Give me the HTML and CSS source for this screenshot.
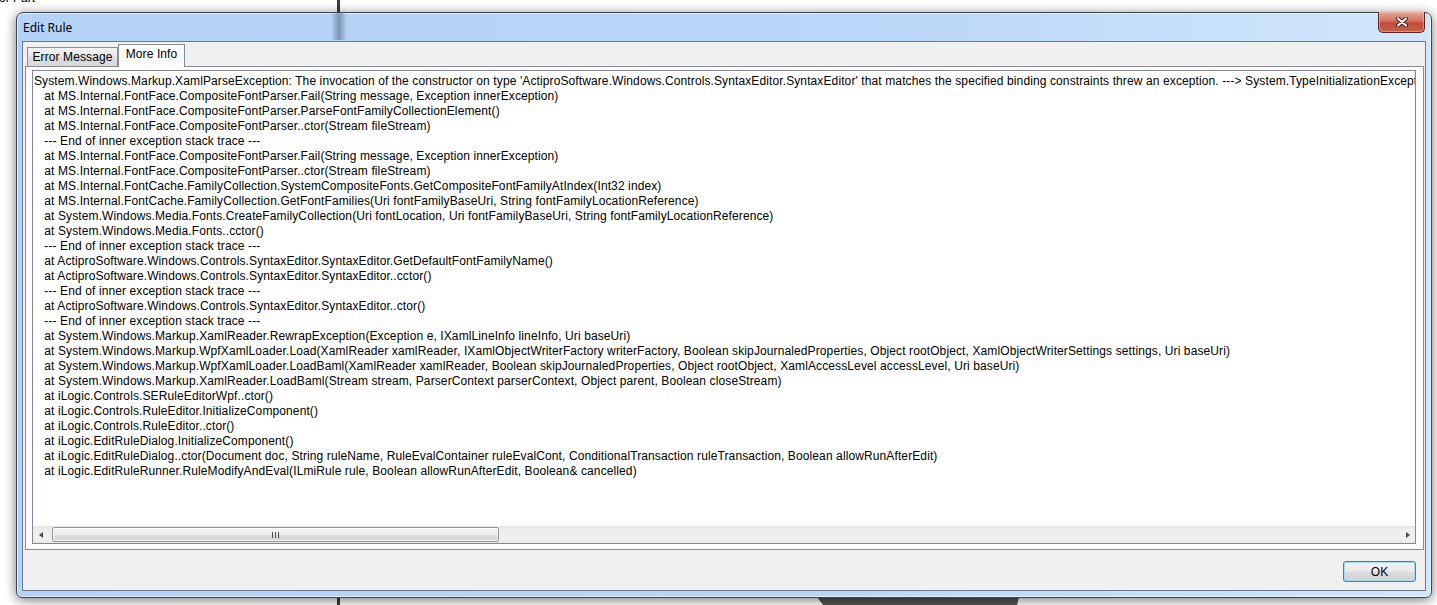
FILE: index.html
```html
<!DOCTYPE html>
<html lang="en">
<head>
  <meta charset="UTF-8" />
  <title>Edit Rule</title>
  <link rel="stylesheet" href="styles.css">
</head>
<body>
  <div class="desktop">
    <div class="bg-text">or Part</div>
    <div class="bg-line"></div>
    <div class="bg-shape"></div>

    <div class="window">
      <div class="titlebar">
        <span class="title">Edit Rule</span>
        <div class="glass-band"></div>
        <div class="close">
          <svg width="14" height="10" viewBox="0 0 14 10">
            <path d="M3 1.5 L11 8.5 M11 1.5 L3 8.5" stroke="#3b1a1a" stroke-width="4" stroke-linecap="round" fill="none"/>
            <path d="M3 1.5 L11 8.5 M11 1.5 L3 8.5" stroke="#fff" stroke-width="2.2" stroke-linecap="round" fill="none"/>
          </svg>
        </div>
      </div>

      <div class="client">
        <div class="tabs">
          <div class="tab tab-err">Error Message</div>
          <div class="tab active">More Info</div>
        </div>
        <div class="tab-panel">
          <div class="textbox">
<div class="trace">System.Windows.Markup.XamlParseException: The invocation of the constructor on type 'ActiproSoftware.Windows.Controls.SyntaxEditor.SyntaxEditor' that matches the specified binding constraints threw an exception. ---&gt; System.TypeInitializationException: The type initializer for 'ActiproSoftware.Windows.Controls.SyntaxEditor.SyntaxEditor' threw an exception.
   at MS.Internal.FontFace.CompositeFontParser.Fail(String message, Exception innerException)
   at MS.Internal.FontFace.CompositeFontParser.ParseFontFamilyCollectionElement()
   at MS.Internal.FontFace.CompositeFontParser..ctor(Stream fileStream)
   --- End of inner exception stack trace ---
   at MS.Internal.FontFace.CompositeFontParser.Fail(String message, Exception innerException)
   at MS.Internal.FontFace.CompositeFontParser..ctor(Stream fileStream)
   at MS.Internal.FontCache.FamilyCollection.SystemCompositeFonts.GetCompositeFontFamilyAtIndex(Int32 index)
   at MS.Internal.FontCache.FamilyCollection.GetFontFamilies(Uri fontFamilyBaseUri, String fontFamilyLocationReference)
   at System.Windows.Media.Fonts.CreateFamilyCollection(Uri fontLocation, Uri fontFamilyBaseUri, String fontFamilyLocationReference)
   at System.Windows.Media.Fonts..cctor()
   --- End of inner exception stack trace ---
   at ActiproSoftware.Windows.Controls.SyntaxEditor.SyntaxEditor.GetDefaultFontFamilyName()
   at ActiproSoftware.Windows.Controls.SyntaxEditor.SyntaxEditor..cctor()
   --- End of inner exception stack trace ---
   at ActiproSoftware.Windows.Controls.SyntaxEditor.SyntaxEditor..ctor()
   --- End of inner exception stack trace ---
   at System.Windows.Markup.XamlReader.RewrapException(Exception e, IXamlLineInfo lineInfo, Uri baseUri)
   at System.Windows.Markup.WpfXamlLoader.Load(XamlReader xamlReader, IXamlObjectWriterFactory writerFactory, Boolean skipJournaledProperties, Object rootObject, XamlObjectWriterSettings settings, Uri baseUri)
   at System.Windows.Markup.WpfXamlLoader.LoadBaml(XamlReader xamlReader, Boolean skipJournaledProperties, Object rootObject, XamlAccessLevel accessLevel, Uri baseUri)
   at System.Windows.Markup.XamlReader.LoadBaml(Stream stream, ParserContext parserContext, Object parent, Boolean closeStream)
   at iLogic.Controls.SERuleEditorWpf..ctor()
   at iLogic.Controls.RuleEditor.InitializeComponent()
   at iLogic.Controls.RuleEditor..ctor()
   at iLogic.EditRuleDialog.InitializeComponent()
   at iLogic.EditRuleDialog..ctor(Document doc, String ruleName, RuleEvalContainer ruleEvalCont, ConditionalTransaction ruleTransaction, Boolean allowRunAfterEdit)
   at iLogic.EditRuleRunner.RuleModifyAndEval(ILmiRule rule, Boolean allowRunAfterEdit, Boolean&amp; cancelled)</div>
            <div class="hscroll">
              <div class="sb-btn"><span class="arrow-left"></span></div>
              <div class="sb-track">
                <div class="sb-thumb">
                  <svg width="8" height="6" viewBox="0 0 8 6">
                    <path d="M0.5 0 V6 M3.5 0 V6 M6.5 0 V6" stroke="#4d4d4d" stroke-width="1" fill="none"/>
                  </svg>
                </div>
              </div>
              <div class="sb-btn"><span class="arrow-right"></span></div>
            </div>
          </div>
        </div>
        <div class="footer">
          <button class="ok">OK</button>
        </div>
      </div>
    </div>
  </div>
</body>
</html>
```

FILE: styles.css
```css
* { box-sizing: border-box; }
body { margin: 0; background: #fff; font-family: "Liberation Sans", Arial, sans-serif; font-size: 12px; color: #000; overflow: hidden; }
.desktop { position: relative; width: 1437px; height: 605px; overflow: hidden; background: #fff; }

/* things behind the dialog */
.bg-text { position: absolute; left: -1px; top: -8px; font-size: 12px; line-height: 12px; }
.bg-line { position: absolute; left: 337px; top: 0; width: 3px; height: 605px; background: #3a3a3a; }
.bg-shape { position: absolute; left: 817px; top: 597px; width: 202px; height: 8px; background: #555; clip-path: polygon(0 0, 100% 0, 99% 100%, 3% 100%); }

/* dialog frame */
.window { position: absolute; left: 16px; top: 12px; width: 1416px; height: 586px; padding: 0 5px 6px; display: flex; flex-direction: column;
  border: 1px solid #3d4753; border-radius: 7px 7px 6px 6px;
  background: linear-gradient(90deg, #b3d2f5, #b9d7f8 60%, #d2e6fb);
  box-shadow: inset 0 0 0 1px rgba(255,255,255,0.55), 0 2px 12px rgba(0,0,0,0.55); }
.titlebar { position: relative; height: 28px; flex: none; display: flex; align-items: center; padding-left: 1px; }
.title { font-family: "Noto Sans", "Open Sans", sans-serif; font-size: 12px; position: relative; z-index: 1; }
.glass-band { position: absolute; left: 309px; top: -1px; width: 16px; height: 28px; background: linear-gradient(90deg, rgba(60,80,110,0), rgba(60,80,110,0.45) 45%, rgba(60,80,110,0.45) 55%, rgba(60,80,110,0)); }
.close { position: absolute; right: 1px; top: -1px; width: 47px; height: 21px; display: flex; align-items: center; justify-content: center;
  border: 1px solid #5b2424; border-top: none; border-radius: 0 0 5px 5px;
  background: linear-gradient(#e6a898, #d0725f 45%, #c14a3a 55%, #c8614c);
  box-shadow: inset 0 0 0 1px rgba(255,200,190,0.45); }

/* client area */
.client { flex: none; height: 550px; border: 1px solid #6b7a8c; background: #f0f0f0; padding: 2px 1px 0 2px; display: flex; flex-direction: column; }
.tabs { height: 22px; flex: none; display: flex; align-items: flex-end; padding-left: 2px; position: relative; z-index: 1; }
.tab { height: 19px; border: 1px solid #898c95; border-bottom: none; text-align: center; line-height: 18px; letter-spacing: 0.1px;
  background: linear-gradient(#f3f3f3, #e8e8e8 45%, #dcdcdc 55%, #d9d9d9); }
.tab-err { width: 91px; }
.tab.active { width: 67px; height: 23px; margin-bottom: -1px; background: #fcfcfc; line-height: 18px; }

.tab-panel { height: 484px; flex: none; border: 1px solid #898c95; background: #fcfcfc; padding: 3px 7px 5px 6px; }
.textbox { height: 474px; border: 1px solid #828790; background: #fff; display: flex; flex-direction: column; overflow: hidden; }
.trace { flex: 1; overflow: hidden; white-space: pre; padding: 3px 0 0 1px; line-height: 15px; letter-spacing: 0.11px; }

/* horizontal scrollbar */
.hscroll { height: 17px; flex: none; display: flex; background: linear-gradient(#e4e4e4, #eeeeee 20%, #f0f0f0 80%, #e8e8e8); }
.sb-btn { width: 17px; flex: none; display: flex; align-items: center; justify-content: center; }
.arrow-left { width: 0; height: 0; border-top: 3.5px solid transparent; border-bottom: 3.5px solid transparent; border-right: 4px solid #4a4a4a; margin-left: -1px; }
.arrow-right { width: 0; height: 0; border-top: 3.5px solid transparent; border-bottom: 3.5px solid transparent; border-left: 4px solid #4a4a4a; margin-left: 2px; }
.sb-track { flex: 1; padding: 1px 0 1px 2px; }
.sb-thumb { width: 447px; height: 15px; border: 1px solid #979797; border-radius: 2px; display: flex; align-items: center; justify-content: center;
  background: linear-gradient(#f5f5f5, #ececec 50%, #dcdcdc 55%, #d5d5d5);
  box-shadow: inset 0 0 0 1px rgba(255,255,255,0.7); }

/* footer */
.footer { flex: 1; display: flex; justify-content: flex-end; align-items: flex-start; padding: 11px 8px 0 0; }
.ok { width: 73px; height: 21px; padding: 0; font: 12px "Liberation Sans", Arial, sans-serif; color: #000;
  border: 1px solid #3c7fb1; border-radius: 3px;
  background: linear-gradient(#f2f2f2, #ebebeb 45%, #dddddd 55%, #d2d2d2);
  box-shadow: inset 0 0 0 1px #a6dbf7; }
```
